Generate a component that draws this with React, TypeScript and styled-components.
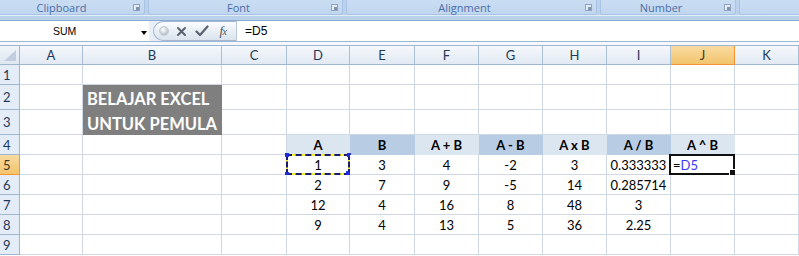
import React from 'react'
import styled, { createGlobalStyle, css } from 'styled-components'

const GlobalStyle = createGlobalStyle`
    html, body {
        margin: 0;
        padding: 0;
        background: #ffffff;
    }
    * {
        box-sizing: border-box;
    }
`

const Page = styled.div`
    width: 799px;
    height: 256px;
    overflow: hidden;
    background: #ffffff;
    font-family: Lato, 'Liberation Sans', sans-serif;
`

const Ribbon = styled.div`
    height: 15px;
    display: flex;
    gap: 3px;
    margin-left: -8px;
    background: #bcd2ec;
`

const RibbonGroup = styled.div<{ $width: number }>`
    flex: 0 0 ${(p) => p.$width}px;
    position: relative;
    height: 15px;
    padding-right: 14px;
    display: flex;
    align-items: center;
    justify-content: center;
    background: linear-gradient(180deg, #c9dcf2 0%, #c1d7f0 100%);
    border: 1px solid #a9c3e4;
    border-top: none;
    border-radius: 0 0 3px 3px;
    font-family: 'Open Sans', 'Liberation Sans', sans-serif;
    font-size: 11px;
    color: #4c6ea6;
    line-height: 1;
`

const Launcher = styled.span`
    position: absolute;
    right: 4px;
    top: 4px;
    width: 7px;
    height: 7px;
    border: 1px solid #8ea3bf;
    background: #e3ecf7;
    &::after {
        content: '';
        position: absolute;
        right: 0;
        bottom: 0;
        width: 3px;
        height: 3px;
        background: #7f93ad;
    }
`

const Band = styled.div`
    height: 6px;
    border-top: 1px solid #e2ecf8;
    background: #bad1ec;
    border-bottom: 1px solid #8eabd2;
`

const FormulaBar = styled.div`
    height: 21px;
    display: flex;
    align-items: stretch;
    background: #e9eff7;
    border-bottom: 1px solid #9fb6d0;
`

const NameBox = styled.div`
    width: 149px;
    position: relative;
    background: #ffffff;
    font-family: 'Liberation Sans', Arial, sans-serif;
    font-size: 10.5px;
    color: #000;
    display: flex;
    align-items: center;
    padding-left: 53px;
    margin-right: 4px;
`

const DropArrow = styled.span`
    position: absolute;
    left: 141px;
    top: 10px;
    width: 0;
    height: 0;
    border-left: 3.5px solid transparent;
    border-right: 3.5px solid transparent;
    border-top: 4px solid #000;
`

const Capsule = styled.div`
    width: 84px;
    display: flex;
    align-items: center;
    padding-left: 4px;
    border: 1px solid #a3b7d0;
    border-right: 1px solid #b7c6d9;
    border-radius: 11px 0 0 11px;
    background: linear-gradient(180deg, #fbfcfe 0%, #e8eef5 55%, #dbe3ee 100%);
`

const IconSlot = styled.span<{ $width: number }>`
    width: ${(p) => p.$width}px;
    display: flex;
    align-items: center;
    justify-content: center;
`

const Knob = styled.span`
    width: 10px;
    height: 10px;
    border-radius: 50%;
    background: radial-gradient(circle at 40% 35%, #ffffff 0%, #d4d9e0 45%, #a7afba 100%);
    border: 1px solid #c3cad4;
`

const Fx = styled.span`
    font-family: 'Liberation Serif', 'DejaVu Serif', serif;
    font-style: italic;
    font-size: 13px;
    color: #4a5363;
    letter-spacing: -0.5px;
    span {
        font-size: 10px;
    }
`

const FormulaInput = styled.div`
    flex: 1;
    background: #ffffff;
    display: flex;
    align-items: center;
    padding-left: 8px;
    font-family: 'Liberation Sans', Arial, sans-serif;
    font-size: 12px;
    color: #000;
`

const Gap = styled.div`
    height: 4px;
    background: #f4f7fb;
    border-bottom: 1px solid #9eb6ce;
`

const Sheet = styled.div`
    display: grid;
    grid-template-columns: 20px 63px 139px 65px 63px 65px 64px 64px 64px 64px 64px 64px;
    grid-template-rows: 19px 20px 25px 25px repeat(6, 20px);
`

const headerActive = css`
    background: linear-gradient(180deg, #f9dba1 0%, #f2c46c 100%);
    border-color: #f29536;
    color: #3b3b2a;
`

const Corner = styled.div`
    position: relative;
    background: linear-gradient(180deg, #f1f5fa 0%, #dfe7f2 100%);
    border-right: 1px solid #9eb6ce;
    border-bottom: 1px solid #9eb6ce;
    &::after {
        content: '';
        position: absolute;
        right: 3px;
        bottom: 3px;
        width: 12px;
        height: 11px;
        background: #c0cedf;
        clip-path: polygon(100% 0, 100% 100%, 0 100%);
    }
`

const ColHeader = styled.div<{ $active?: boolean }>`
    display: flex;
    align-items: center;
    justify-content: center;
    background: linear-gradient(180deg, #f5f8fc 0%, #e2e9f3 100%);
    border-right: 1px solid #aabfd6;
    border-bottom: 1px solid #9eb6ce;
    font-size: 13px;
    color: #1e395b;
    ${(p) => p.$active && headerActive}
`

const RowHeader = styled.div<{ $active?: boolean }>`
    display: flex;
    align-items: center;
    padding-left: 3px;
    background: #e4ecf7;
    border-right: 1px solid #9eb6ce;
    border-bottom: 1px solid #9eb6ce;
    font-size: 13px;
    color: #1e395b;
    ${(p) => p.$active && headerActive}
`

type Shade = 'light' | 'dark' | undefined

const shadeColor = (s: Shade) => (s === 'light' ? '#dce6f1' : s === 'dark' ? '#b8cce4' : '#ffffff')

const Cell = styled.div<{ $shade?: Shade; $bold?: boolean; $left?: boolean }>`
    position: relative;
    display: flex;
    align-items: center;
    justify-content: ${(p) => (p.$left ? 'flex-start' : 'center')};
    padding: 1px 2px 0 2px;
    background: ${(p) => shadeColor(p.$shade)};
    border-right: 1px solid ${(p) => (p.$shade ? shadeColor(p.$shade) : '#d0d7e5')};
    border-bottom: 1px solid ${(p) => (p.$shade ? shadeColor(p.$shade) : '#d0d7e5')};
    font-size: 13px;
    font-weight: ${(p) => (p.$bold ? 700 : 400)};
    color: #000;
    white-space: nowrap;
`

const ActiveBox = styled.span`
    position: absolute;
    top: -1px;
    left: -2px;
    right: -1px;
    bottom: -1px;
    border: 2px solid #111;
    pointer-events: none;
    &::after {
        content: '';
        position: absolute;
        right: -3px;
        bottom: -3px;
        width: 5px;
        height: 5px;
        background: #111;
        border: 1px solid #fff;
    }
`

const RefBox = styled.span`
    position: absolute;
    top: -1px;
    left: -1px;
    right: -1px;
    bottom: -1px;
    border: 2px solid #f5ef2a;
    pointer-events: none;
    &::before {
        content: '';
        position: absolute;
        inset: -2px;
        border: 2px dashed #1b1b6e;
    }
`

const Handle = styled.span<{ $pos: 'tl' | 'tr' | 'bl' | 'br' }>`
    position: absolute;
    width: ${(p) => (p.$pos === 'br' ? 5 : 4)}px;
    height: ${(p) => (p.$pos === 'br' ? 5 : 4)}px;
    background: #1f2bd6;
    ${(p) => (p.$pos[0] === 't' ? 'top: -3px;' : 'bottom: -3px;')}
    ${(p) => (p.$pos[1] === 'l' ? 'left: -3px;' : 'right: -3px;')}
`

const RefText = styled.span`
    color: #3a3af5;
`

const TitleBlock = styled.div`
    grid-column: 3;
    grid-row: 3 / span 2;
    background: #7f7f7f;
    padding: 2px 0 0 4px;
    font-family: Lato, 'Liberation Sans', sans-serif;
    font-size: 16.5px;
    font-weight: 700;
    color: #ffffff;
    div {
        height: 25px;
        line-height: 25px;
    }
`

const columns = ['A', 'B', 'C', 'D', 'E', 'F', 'G', 'H', 'I', 'J', 'K']

const tableHead = ['A', 'B', 'A + B', 'A - B', 'A x B', 'A / B', 'A ^ B']
const tableBody = [
    ['1', '3', '4', '-2', '3', '0.333333'],
    ['2', '7', '9', '-5', '14', '0.285714'],
    ['12', '4', '16', '8', '48', '3'],
    ['9', '4', '13', '5', '36', '2.25'],
]

const XIcon = () => (
    <svg width="11" height="11" viewBox="0 0 11 11">
        <path d="M2 2 L9 9 M9 2 L2 9" stroke="#59626f" strokeWidth="2" strokeLinecap="round" />
    </svg>
)

const CheckIcon = () => (
    <svg width="14" height="12" viewBox="0 0 14 12">
        <path d="M1.5 6.5 L5 10 L12.5 1.5" stroke="#59626f" strokeWidth="2.2" fill="none" strokeLinecap="round" strokeLinejoin="round" />
    </svg>
)

const renderCell = (row: number, colIdx: number) => {
    const key = `${row}-${colIdx}`
    // table lives in columns D..J (index 3..9), rows 4..8
    const tIdx = colIdx - 3
    if (row === 4 && tIdx >= 0 && tIdx <= 6) {
        return (
            <Cell key={key} $shade={tIdx % 2 === 0 ? 'light' : 'dark'} $bold>
                {tableHead[tIdx]}
            </Cell>
        )
    }
    if (row >= 5 && row <= 8 && tIdx >= 0 && tIdx <= 5) {
        return (
            <Cell key={key}>
                {tableBody[row - 5][tIdx]}
                {row === 5 && tIdx === 0 && (
                    <RefBox>
                        <Handle $pos="tl" />
                        <Handle $pos="tr" />
                        <Handle $pos="bl" />
                        <Handle $pos="br" />
                    </RefBox>
                )}
            </Cell>
        )
    }
    if (row === 5 && tIdx === 6) {
        return (
            <Cell key={key} $left>
                =<RefText>D5</RefText>
                <ActiveBox />
            </Cell>
        )
    }
    return <Cell key={key} />
}

const App = () => {
    const groups = [
        { label: 'Clipboard', width: 153 },
        { label: 'Font', width: 195 },
        { label: 'Alignment', width: 251 },
        { label: 'Number', width: 136 },
        { label: '', width: 120 },
    ]
    return (
        <Page>
            <GlobalStyle />
            <Ribbon>
                {groups.map((g) => (
                    <RibbonGroup key={g.width} $width={g.width}>
                        {g.label}
                        {g.label && <Launcher />}
                    </RibbonGroup>
                ))}
            </Ribbon>
            <Band />
            <FormulaBar>
                <NameBox>
                    SUM
                    <DropArrow />
                </NameBox>
                <Capsule>
                    <IconSlot $width={12}>
                        <Knob />
                    </IconSlot>
                    <IconSlot $width={22}>
                        <XIcon />
                    </IconSlot>
                    <IconSlot $width={20}>
                        <CheckIcon />
                    </IconSlot>
                    <IconSlot $width={22}>
                        <Fx>
                            f<span>x</span>
                        </Fx>
                    </IconSlot>
                </Capsule>
                <FormulaInput>=D5</FormulaInput>
            </FormulaBar>
            <Gap />
            <Sheet>
                <Corner />
                {columns.map((c) => (
                    <ColHeader key={c} $active={c === 'J'}>
                        {c}
                    </ColHeader>
                ))}
                {Array.from({ length: 9 }, (_, i) => i + 1).map((row) => (
                    <React.Fragment key={row}>
                        <RowHeader $active={row === 5}>{row}</RowHeader>
                        {columns.map((_, ci) => {
                            if (ci === 1 && (row === 2 || row === 3)) {
                                return row === 2 ? (
                                    <TitleBlock key="title">
                                        <div>BELAJAR EXCEL</div>
                                        <div>UNTUK PEMULA</div>
                                    </TitleBlock>
                                ) : null
                            }
                            return renderCell(row, ci)
                        })}
                    </React.Fragment>
                ))}
            </Sheet>
        </Page>
    )
}

export default App
